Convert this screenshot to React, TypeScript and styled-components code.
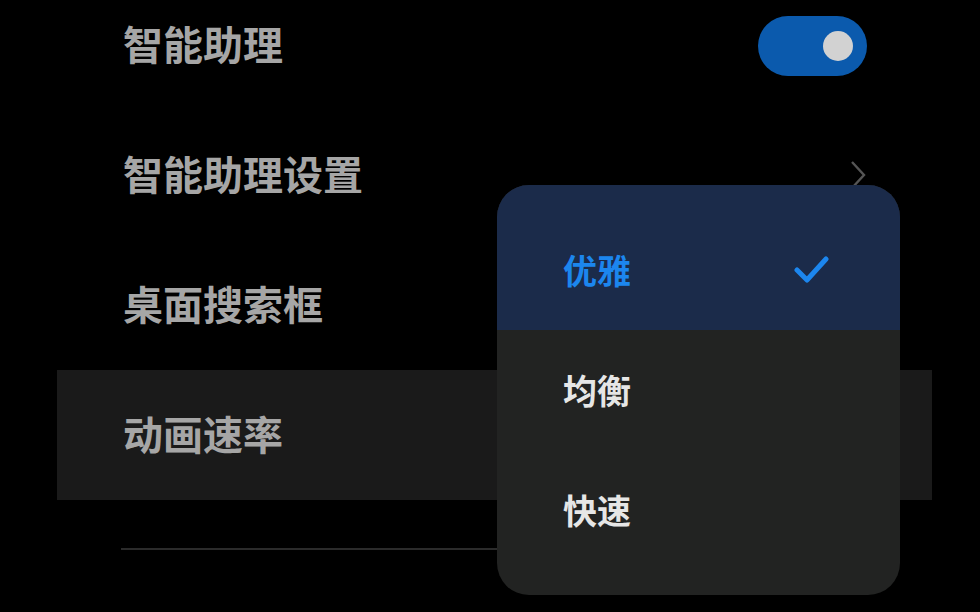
import styled, { createGlobalStyle } from "styled-components";

const GlobalStyle = createGlobalStyle`
  html, body {
    margin: 0;
    padding: 0;
    background: #000;
    overflow: hidden;
  }
  body {
    font-family: "Noto Sans CJK SC", "Noto Sans", sans-serif;
  }
`;

const Screen = styled.div`
  position: relative;
  width: 980px;
  height: 612px;
  overflow: hidden;
  background: #000;
`;

// settings list, scrolled a little so the first row is cut at the top
const List = styled.div`
  display: flex;
  flex-direction: column;
  margin: -20px 48px 0 57px;
`;

const Row = styled.div<{ $active?: boolean }>`
  display: flex;
  align-items: center;
  justify-content: space-between;
  height: 130px;
  padding: 0 65px 0 66px;
  background: ${(p) => (p.$active ? "#1a1a1a" : "transparent")};
`;

const Label = styled.span`
  font-size: 40px;
  line-height: 1;
  margin-bottom: 4px;
  font-weight: 700;
  color: #a6a6a6;
`;

const Toggle = styled.div<{ $on: boolean }>`
  display: flex;
  align-items: center;
  justify-content: ${(p) => (p.$on ? "flex-end" : "flex-start")};
  width: 109px;
  height: 60px;
  margin-top: 2px;
  padding: 0 14px;
  box-sizing: border-box;
  border-radius: 30px;
  background: ${(p) => (p.$on ? "#0b5aad" : "#3a3a3a")};
`;

const Knob = styled.div`
  width: 30px;
  height: 30px;
  border-radius: 50%;
  background: #d2d2d2;
`;

const Divider = styled.div`
  height: 2px;
  margin: 48px 65px 0 64px;
  background: #2b2b2b;
`;

const Menu = styled.div`
  position: absolute;
  left: 497px;
  top: 185px;
  width: 403px;
  height: 410px;
  border-radius: 32px;
  overflow: hidden;
  background: #222322;
  display: flex;
  flex-direction: column;
`;

const Option = styled.div<{ $selected?: boolean }>`
  display: flex;
  align-items: center;
  justify-content: space-between;
  height: 120px;
  flex-shrink: 0;
  padding: 0 70px 0 66px;
  box-sizing: border-box;
  background: ${(p) => (p.$selected ? "#1b2b4a" : "transparent")};
  &:first-child {
    height: 145px;
    padding-top: 25px;
  }
`;

const OptionText = styled.span<{ $selected?: boolean }>`
  font-size: 34px;
  line-height: 1;
  font-weight: 700;
  color: ${(p) => (p.$selected ? "#1c86ee" : "#e6e6e6")};
`;

const Chevron = () => (
  <svg width="18" height="30" viewBox="0 0 18 30" fill="none">
    <path d="M3 2 L15 15 L3 28" stroke="#555" strokeWidth="2.4" />
  </svg>
);

const Check = () => (
  <svg width="36" height="28" viewBox="0 0 36 28" fill="none">
    <path
      d="M3 14 L13 24 L32 3"
      stroke="#1c86ee"
      strokeWidth="5"
      strokeLinecap="round"
      strokeLinejoin="round"
    />
  </svg>
);

const speeds = ["优雅", "均衡", "快速"];

export default function App() {
  const current = "优雅";
  return (
    <Screen>
      <GlobalStyle />
      <List>
        <Row>
          <Label>智能助理</Label>
          <Toggle $on>
            <Knob />
          </Toggle>
        </Row>
        <Row>
          <Label>智能助理设置</Label>
          <Chevron />
        </Row>
        <Row>
          <Label>桌面搜索框</Label>
        </Row>
        <Row $active>
          <Label>动画速率</Label>
        </Row>
        <Divider />
      </List>
      <Menu>
        {speeds.map((s) => (
          <Option key={s} $selected={s === current}>
            <OptionText $selected={s === current}>{s}</OptionText>
            {s === current && <Check />}
          </Option>
        ))}
      </Menu>
    </Screen>
  );
}
